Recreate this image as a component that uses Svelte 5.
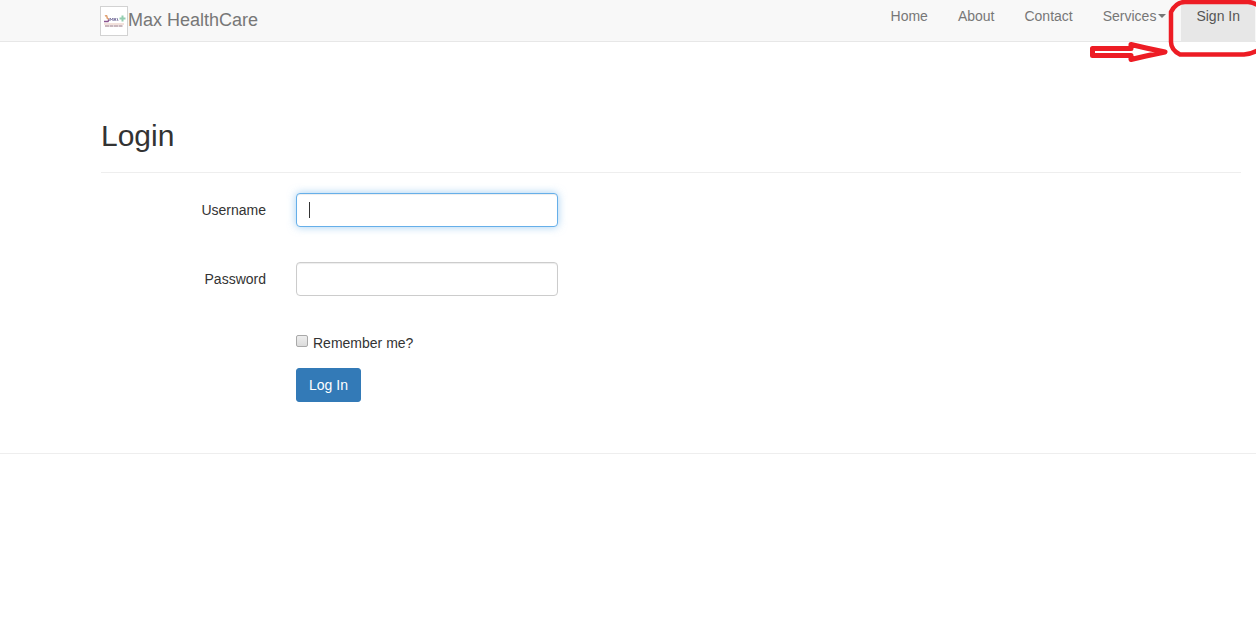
<script>
	import { onMount } from 'svelte';

	let username = $state('');
	let password = $state('');
	let remember = $state(false);
	let usernameInput;

	const links = [
		{ label: 'Home' },
		{ label: 'About' },
		{ label: 'Contact' },
		{ label: 'Services', caret: true },
		{ label: 'Sign In', active: true }
	];

	onMount(() => {
		usernameInput.focus();
	});

	function login(e) {
		e.preventDefault();
	}
</script>

<header class="navbar">
	<a class="brand" href="#home">
		<svg class="logo" width="28" height="30" viewBox="0 0 28 30" aria-hidden="true">
			<rect x="0.5" y="0.5" width="27" height="29" fill="#fff" stroke="#d2d2d2" />
			<path d="M5 10q2-1 2 1t2 2" fill="none" stroke="#e0a070" stroke-width="1.500" />
			<path d="M4 15.500h4l1-2" fill="none" stroke="#8a5590" stroke-width="1.500" />
			<path d="M10 15v-3l1.500 2 1.500-2v3M14 15l1-3 1 3M17 12l1 3" fill="none" stroke="#77709c" stroke-width="0.900" />
			<path d="M22.500 9.500v6M19.500 12.500h6" stroke="#93cdb0" stroke-width="2" />
			<path d="M4 18h20" stroke="#e6c4b8" stroke-width="1" />
			<path d="M5 20h18" stroke="#b8a0a8" stroke-width="1.500" stroke-dasharray="4 0.500" />
		</svg>
		<span>Max HealthCare</span>
	</a>

	<nav>
		<ul>
			{#each links as link}
				<li>
					<a class="nav-link" class:active={link.active} href="#{link.label}">
						{link.label}{#if link.caret}<span class="caret"></span>{/if}
					</a>
				</li>
			{/each}
		</ul>
	</nav>

	<svg class="callout" width="166" height="64" viewBox="0 0 166 64" fill="none" stroke="#ed1c24" aria-hidden="true">
		<path d="M170 7Q164 2 158 2H95Q86 2 81 12V42Q81 50 90 54.500H154Q162 54 170 49" stroke-width="4.500" />
		<path d="M2.500 48.500H41V44.500L56 48 75 52 56 56 41 59.500V55.500H2.500Z" stroke-width="5" stroke-linejoin="round" />
	</svg>
</header>

<main>
	<h2>Login</h2>

	<form onsubmit={login}>
		<label class="field-label" for="username">Username</label>
		<input
			id="username"
			class="control"
			class:empty={!username}
			type="text"
			bind:value={username}
			bind:this={usernameInput}
		/>

		<label class="field-label" for="password">Password</label>
		<input id="password" class="control" class:empty={!password} type="password" bind:value={password} />

		<div class="submit">
			<div class="remember">
				<input id="remember" type="checkbox" bind:checked={remember} />
				<label for="remember">Remember me?</label>
			</div>
			<button type="submit">Log In</button>
		</div>
	</form>
</main>

<hr />

<style>
	:global(body) {
		font-family: 'Liberation Sans', Arial, sans-serif;
		font-size: 14px;
		line-height: 20px;
		color: #333;
		background: #fff;
	}

	.navbar {
		position: relative;
		display: flex;
		justify-content: space-between;
		padding: 0 1px 0 100px;
		background: #f8f8f8;
		border-bottom: 1px solid #e7e7e7;
	}

	.brand {
		display: flex;
		align-items: flex-start;
		padding-top: 6px;
		font-size: 18px;
		line-height: 28px;
		color: #777;
		text-decoration: none;
	}

	.logo {
		display: block;
	}

	ul {
		display: flex;
		margin: 0;
		padding: 0;
		list-style: none;
	}

	.nav-link {
		display: flex;
		align-items: center;
		padding: 6px 15px 15px;
		color: #777;
		text-decoration: none;
	}

	.nav-link.active {
		color: #555;
		background: #e7e7e7;
	}

	.caret {
		margin-left: 2px;
		border-top: 4px solid;
		border-right: 4px solid transparent;
		border-left: 4px solid transparent;
	}

	.callout {
		position: absolute;
		top: 0;
		right: 0;
		pointer-events: none;
	}

	main {
		padding: 77px 15px 0 101px;
	}

	h2 {
		margin: 0 0 20px;
		padding-bottom: 20px;
		border-bottom: 1px solid #eee;
		font-size: 30px;
		font-weight: 400;
		line-height: 33px;
	}

	form {
		display: grid;
		grid-template-columns: 165px 1fr;
		gap: 35px 30px;
		align-items: center;
	}

	.field-label {
		text-align: right;
	}

	.control {
		box-sizing: border-box;
		width: 100%;
		max-width: 262px;
		height: 34px;
		padding: 6px 12px;
		border: 1px solid #ccc;
		border-radius: 4px;
		background: #fff;
		box-shadow: inset 0 1px 1px rgba(0, 0, 0, 0.075);
		color: #555;
		font: inherit;
	}

	.control:focus {
		border-color: #66afe9;
		outline: 0;
		box-shadow: inset 0 1px 1px rgba(0, 0, 0, 0.075), 0 0 8px rgba(102, 175, 233, 0.6);
	}

	/* steady text cursor while the field has no value */
	.control.empty:focus {
		caret-color: transparent;
		background: linear-gradient(#333, #333) 12px center / 1px 16px no-repeat #fff;
	}

	.submit {
		grid-column: 2;
		padding-top: 2px;
	}

	.remember {
		display: flex;
		align-items: center;
		gap: 5px;
		margin-bottom: 15px;
	}

	.remember input {
		appearance: none;
		box-sizing: border-box;
		width: 12px;
		height: 12px;
		margin: 0 0 4px;
		border: 1px solid #a9a9a9;
		border-radius: 2px;
		background: linear-gradient(#eee, #dcdcdc);
	}

	.remember input:checked {
		background: #337ab7;
	}

	button {
		display: block;
		padding: 6px 12px;
		border: 1px solid #337ab7;
		border-radius: 3px;
		background: #337ab7;
		color: #fff;
		font: inherit;
		cursor: pointer;
	}

	hr {
		margin: 51px 0 20px;
		border: 0;
		border-top: 1px solid #eee;
	}
</style>
